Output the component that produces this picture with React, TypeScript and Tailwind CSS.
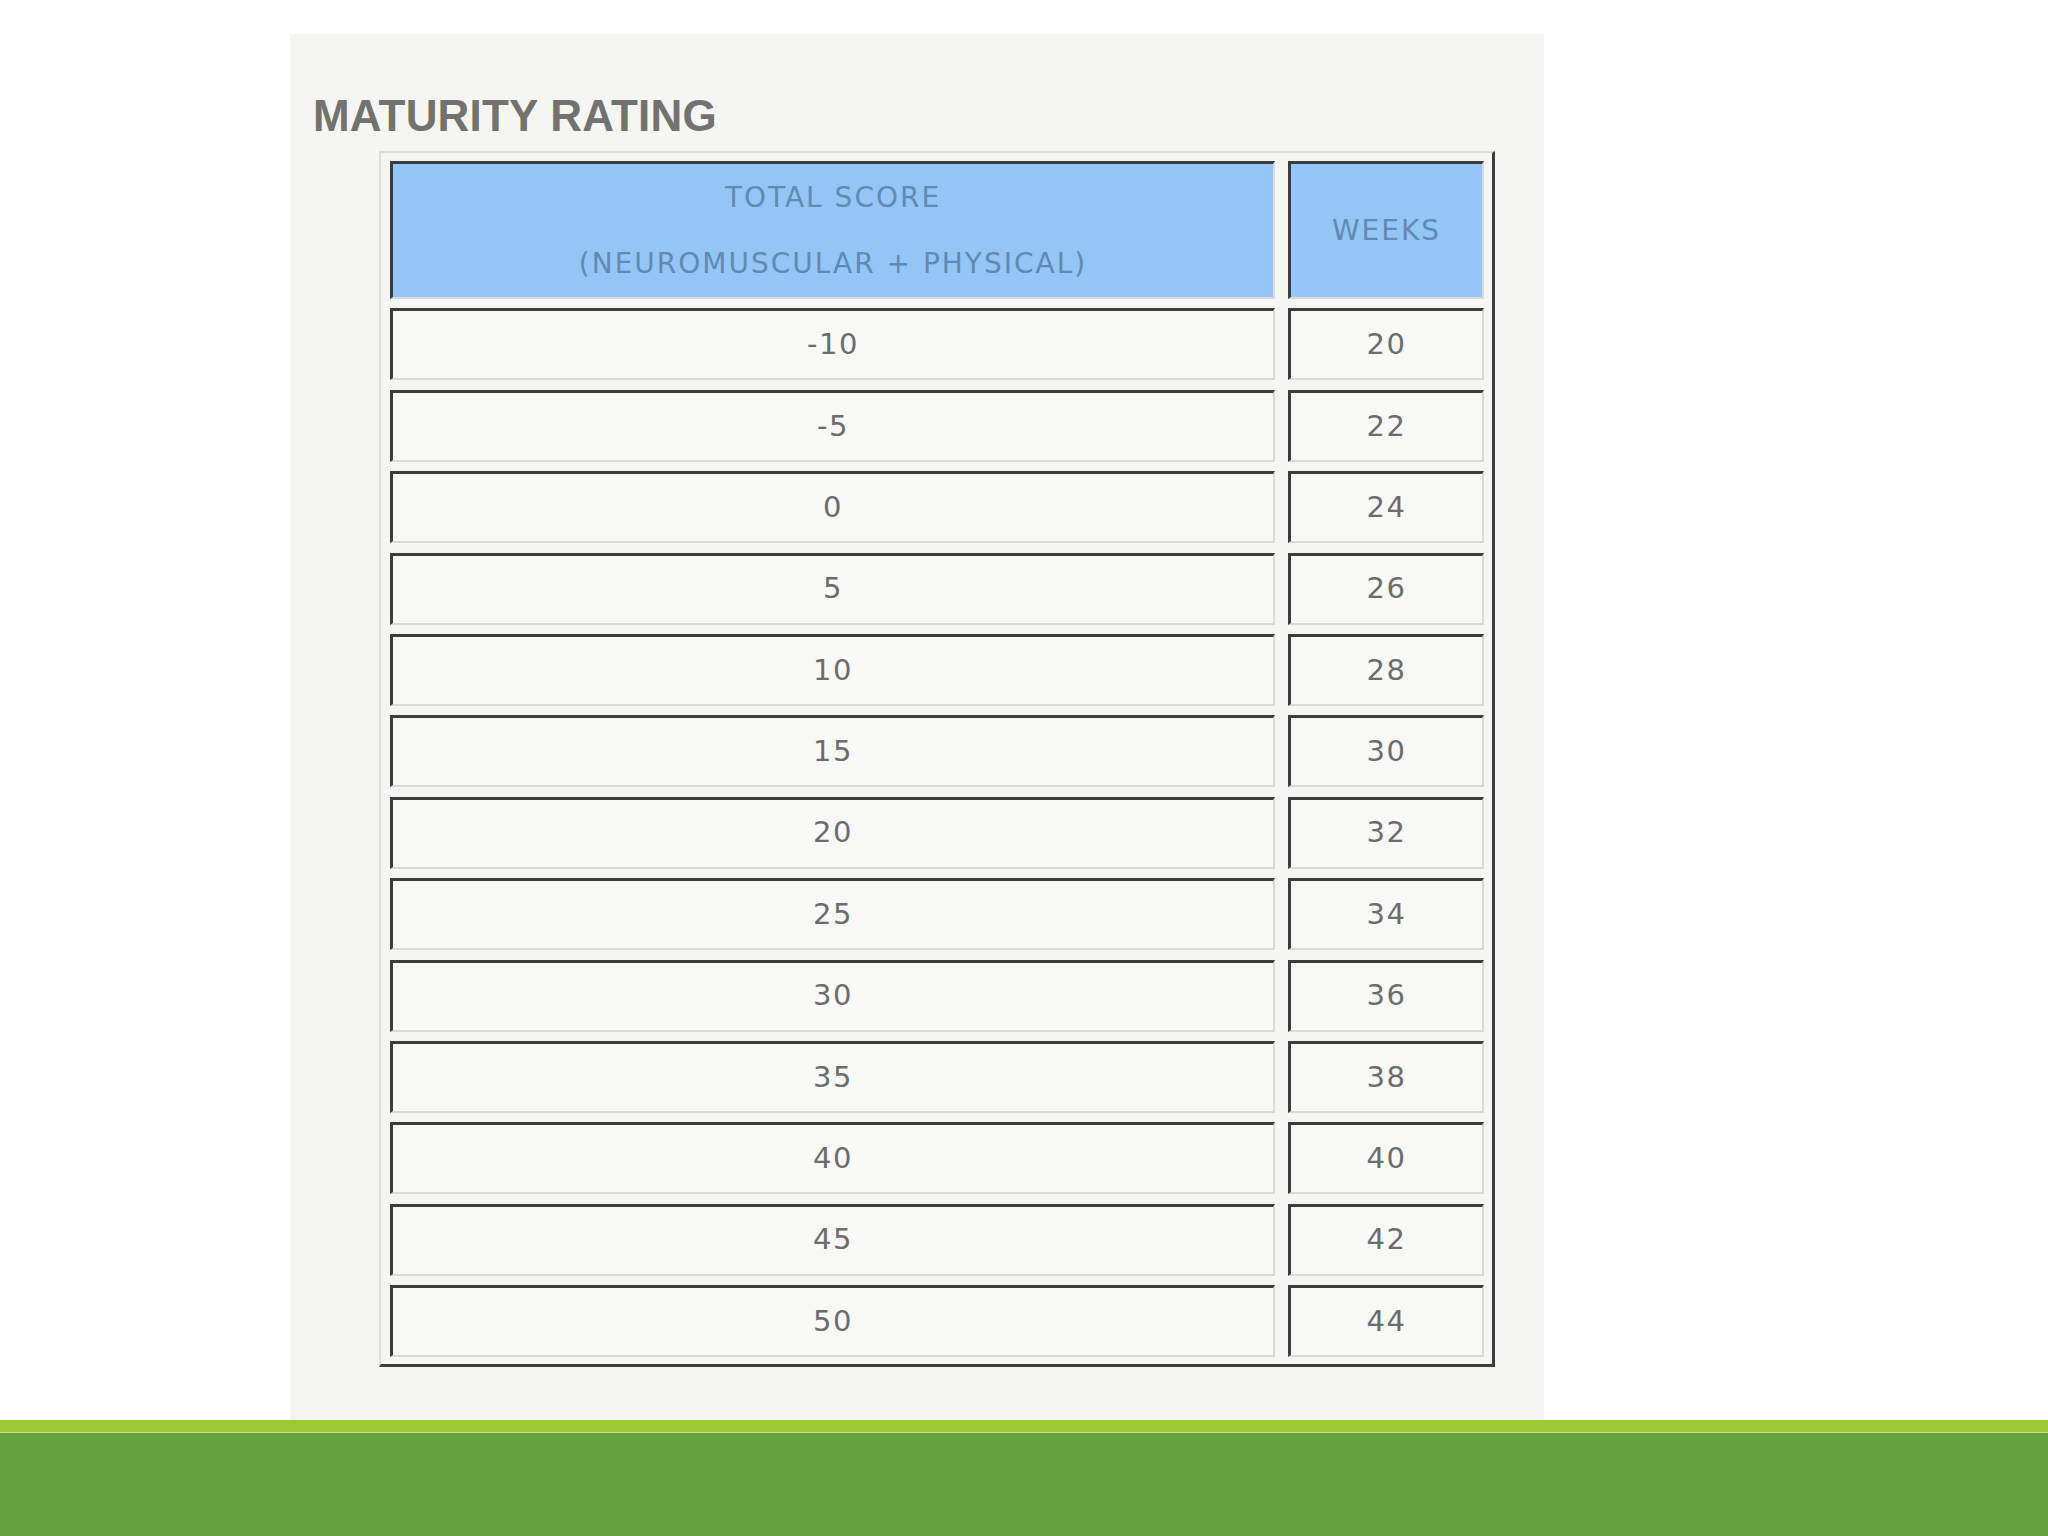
const scores = [
  ["-10", "20"],
  ["-5", "22"],
  ["0", "24"],
  ["5", "26"],
  ["10", "28"],
  ["15", "30"],
  ["20", "32"],
  ["25", "34"],
  ["30", "36"],
  ["35", "38"],
  ["40", "40"],
  ["45", "42"],
  ["50", "44"],
];

// inset cell look: dark top/left, light bottom/right
const cell =
  "flex items-center justify-center border-t-[3px] border-l-[3px] border-b-2 border-r-2 border-t-[#3c3c3c] border-l-[#3c3c3c] border-b-[#d9d9d9] border-r-[#d9d9d9]";

export default function App() {
  return (
    <div
      className="w-[2048px] h-[1536px] flex flex-col bg-white"
      style={{ fontFamily: "'DejaVu Sans', Verdana, sans-serif" }}
    >
      <div className="h-[1420px] pl-[290px] pt-[34px]">
        <div className="w-[1254px] h-[1386px] bg-[#f5f5f3] flex flex-col">
          {/* 見出し */}
          <h1
            className="pl-[23px] pt-[60px] text-[44px] leading-none font-bold tracking-[0.2px] text-[#72726e]"
            style={{ fontFamily: "'Liberation Sans', Arial, sans-serif" }}
          >
            MATURITY RATING
          </h1>

          {/* 表 */}
          <div className="ml-[89px] mt-[13px] w-[1116px] h-[1216px] border-t-2 border-l-2 border-t-[#dcdcdc] border-l-[#dcdcdc] border-b-[3px] border-r-[3px] border-b-[#3c3c3c] border-r-[#3c3c3c] pt-[8px] pl-[9px] grid grid-cols-[885px_196px] gap-x-[13px] gap-y-[9.4px] content-start">
            <div className={`${cell} h-[138px] bg-[#93c6f7] flex-col gap-[38px] text-[28px] leading-none text-[#6189b2] tracking-[2px]`}>
              <span>TOTAL SCORE</span>
              <span>(NEUROMUSCULAR + PHYSICAL)</span>
            </div>
            <div className={`${cell} h-[138px] bg-[#93c6f7] text-[28px] text-[#6189b2] tracking-[2px]`}>
              WEEKS
            </div>

            {scores.map(([score, weeks]) => (
              <>
                <div
                  key={`s${score}`}
                  className={`${cell} h-[72px] bg-[#f8f8f7] text-[29px] tracking-[1.5px] text-[#6c6c6c]`}
                >
                  {score}
                </div>
                <div
                  key={`w${score}`}
                  className={`${cell} h-[72px] bg-[#f8f8f7] text-[29px] tracking-[1.5px] text-[#6c6c6c]`}
                >
                  {weeks}
                </div>
              </>
            ))}
          </div>
        </div>
      </div>

      {/* フッターバー */}
      <div className="h-[13px] bg-[#9aca36] border-b border-[#c8e08a]" />
      <div className="flex-1 bg-[#65a33a]" />
    </div>
  );
}
